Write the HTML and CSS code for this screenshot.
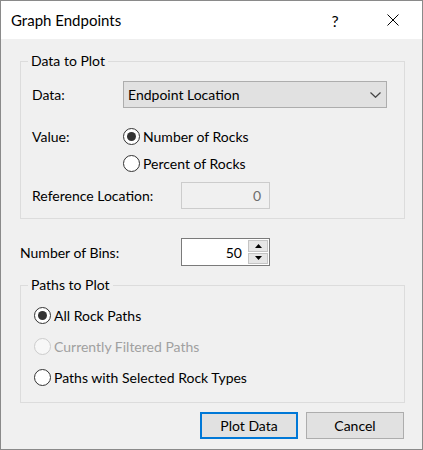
FILE: index.html
```html
<!DOCTYPE html>
<html>
<head>
<meta charset="utf-8">
<title>Graph Endpoints</title>
<link rel="stylesheet" href="styles.css">
</head>
<body>
<div class="window">
  <div class="titlebar">
    <span class="title">Graph Endpoints</span>
    <span class="tb-btn help">?</span>
    <span class="tb-btn close">
      <svg width="12" height="12" viewBox="0 0 12 12"><path d="M0.5 0.5 L11.5 11.5 M11.5 0.5 L0.5 11.5" stroke="#000" stroke-width="1" fill="none"/></svg>
    </span>
  </div>
  <div class="content">
    <div class="group group-data">
      <span class="group-title">Data to Plot</span>
      <div class="row row-data">
        <span class="label label-data">Data:</span>
        <div class="combo">
          <span>Endpoint Location</span>
          <svg width="11" height="6" viewBox="0 0 11 6"><path d="M0.5 0.5 L5.5 5.3 L10.5 0.5" stroke="#444" stroke-width="1.2" fill="none"/></svg>
        </div>
      </div>
      <div class="row row-value">
        <span class="label label-data">Value:</span>
        <div class="radio-list">
          <div class="radio radio-short"><span class="radio-dot checked"><span class="radio-inner"></span></span><span>Number of Rocks</span></div>
          <div class="radio radio-short"><span class="radio-dot"></span><span>Percent of Rocks</span></div>
        </div>
      </div>
      <div class="row row-ref">
        <span class="label label-ref">Reference Location:</span>
        <div class="textbox disabled">0</div>
      </div>
    </div>

    <div class="row row-bins">
      <span class="label label-bins">Number of Bins:</span>
      <div class="spinbox">
        <span class="spin-value">50</span>
        <div class="spin-buttons">
          <span class="spin-btn"><svg width="7" height="4" viewBox="0 0 7 4"><path d="M3.5 0 L7 4 L0 4 Z" fill="#000"/></svg></span>
          <span class="spin-btn"><svg width="7" height="4" viewBox="0 0 7 4"><path d="M0 0 L7 0 L3.5 4 Z" fill="#000"/></svg></span>
        </div>
      </div>
    </div>

    <div class="group group-paths">
      <span class="group-title">Paths to Plot</span>
      <div class="radio radio-tall"><span class="radio-dot checked"><span class="radio-inner"></span></span><span>All Rock Paths</span></div>
      <div class="radio radio-tall is-disabled"><span class="radio-dot"></span><span>Currently Filtered Paths</span></div>
      <div class="radio radio-tall"><span class="radio-dot"></span><span>Paths with Selected Rock Types</span></div>
    </div>

    <div class="buttons">
      <div class="btn default">Plot Data</div>
      <div class="btn">Cancel</div>
    </div>
  </div>
</div>
</body>
</html>
```

FILE: styles.css
```css
html, body {
  margin: 0;
  padding: 0;
  background: #f0f0f0;
}

body {
  font-family: "Lato", "Noto Sans", sans-serif;
  font-size: 14px;
  color: #000;
}

.window {
  width: 423px;
  height: 450px;
  box-sizing: border-box;
  border: 1px solid #8a8a8a;
  background: #f0f0f0;
  overflow: hidden;
}

.titlebar {
  height: 38px;
  background: #fff;
  display: flex;
  align-items: center;
}

.title {
  flex: 1;
  padding-left: 10px;
  font-size: 15px;
  color: #000;
}

.tb-btn {
  width: 58px;
  height: 38px;
  display: flex;
  align-items: center;
  justify-content: center;
  color: #000;
}

.help {
  font-size: 16px;
  font-weight: 400;
}

.content {
  padding: 22px 17px 0 19px;
}

.group {
  position: relative;
  border: 1px solid #dcdcdc;
}

.group-title {
  position: absolute;
  top: -11px;
  left: 7px;
  padding: 0 3px;
  line-height: 20px;
  background: #f0f0f0;
}

.group-data {
  padding: 19px 0 9px 11px;
}

.group-paths {
  margin-top: 19px;
  padding: 14px 0 9px 13px;
}

.row {
  display: flex;
  align-items: center;
}

.label-data {
  width: 91px;
  flex: none;
}

.label-ref {
  width: 149px;
  flex: none;
}

.label-bins {
  width: 161px;
  flex: none;
}

.row-value {
  margin-top: 15px;
  align-items: flex-start;
}

.row-value .label {
  line-height: 27px;
}

.row-ref {
  margin-top: 5px;
}

.combo {
  width: 264px;
  height: 27px;
  box-sizing: border-box;
  border: 1px solid #adadad;
  background: #e1e1e1;
  display: flex;
  align-items: center;
  justify-content: space-between;
  padding: 0 5px 0 4px;
}

.radio {
  display: flex;
  align-items: center;
  gap: 3px;
}

.radio-short {
  height: 27px;
}

.radio-tall {
  height: 31px;
}

.radio-dot {
  width: 17px;
  height: 17px;
  box-sizing: border-box;
  border: 1px solid #333;
  border-radius: 50%;
  background: #fff;
  display: flex;
  align-items: center;
  justify-content: center;
  flex: none;
}

.radio-inner {
  width: 9px;
  height: 9px;
  border-radius: 50%;
  background: #333;
}

.is-disabled {
  color: #a0a0a0;
}

.is-disabled .radio-dot {
  border-color: #cccccc;
  background: #f7f7f7;
}

.textbox {
  width: 89px;
  height: 27px;
  box-sizing: border-box;
  border: 1px solid #cccccc;
  display: flex;
  align-items: center;
  justify-content: flex-end;
  padding-right: 8px;
}

.textbox.disabled {
  background: #f0f0f0;
  color: #6d6d6d;
}

.row-bins {
  margin-top: 19px;
  height: 28px;
}

.spinbox {
  width: 89px;
  height: 28px;
  box-sizing: border-box;
  border: 1px solid #7a7a7a;
  background: #fff;
  display: flex;
  align-items: stretch;
}

.spin-value {
  flex: 1;
  text-align: right;
  padding-right: 6px;
  display: flex;
  align-items: center;
  justify-content: flex-end;
}

.spin-buttons {
  width: 20px;
  padding: 1px 1px 1px 0;
  display: flex;
  flex-direction: column;
  gap: 1px;
}

.spin-btn {
  height: 12px;
  box-sizing: border-box;
  border: 1px solid #c4c4c4;
  background: #e6e6e6;
  display: flex;
  align-items: center;
  justify-content: center;
}

.buttons {
  margin-top: 9px;
  display: flex;
  justify-content: flex-end;
  gap: 8px;
  padding-right: 1px;
}

.btn {
  width: 98px;
  height: 27px;
  box-sizing: border-box;
  border: 1px solid #adadad;
  background: #e1e1e1;
  display: flex;
  align-items: center;
  justify-content: center;
}

.btn.default {
  border: 2px solid #0078d7;
}
```
